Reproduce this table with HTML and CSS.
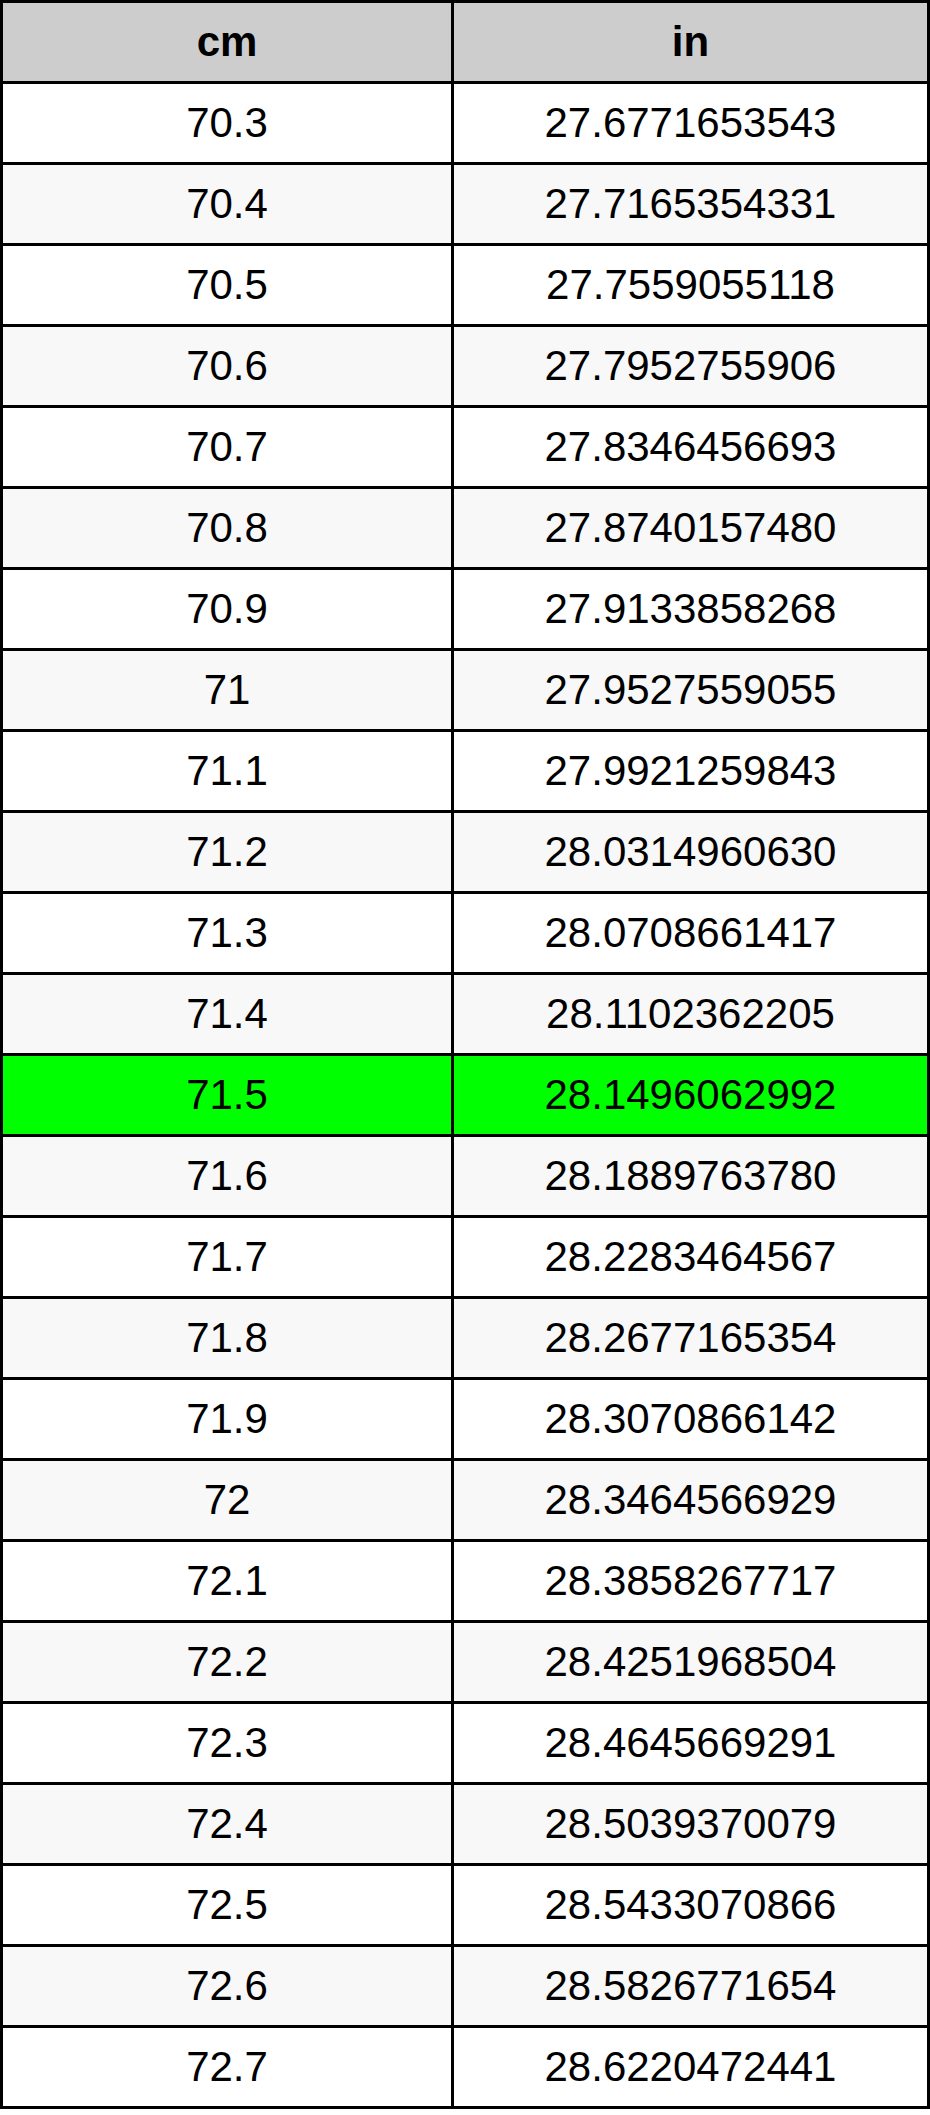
FILE: index.html
```html
<!DOCTYPE html>
<html>
<head>
<meta charset="utf-8">
<link rel="stylesheet" href="styles.css">
</head>
<body>
<div class="table">
<div class="cell head">cm</div><div class="cell head">in</div>
<div class="cell">70.3</div><div class="cell">27.6771653543</div>
<div class="cell alt">70.4</div><div class="cell alt">27.7165354331</div>
<div class="cell">70.5</div><div class="cell">27.7559055118</div>
<div class="cell alt">70.6</div><div class="cell alt">27.7952755906</div>
<div class="cell">70.7</div><div class="cell">27.8346456693</div>
<div class="cell alt">70.8</div><div class="cell alt">27.8740157480</div>
<div class="cell">70.9</div><div class="cell">27.9133858268</div>
<div class="cell alt">71</div><div class="cell alt">27.9527559055</div>
<div class="cell">71.1</div><div class="cell">27.9921259843</div>
<div class="cell alt">71.2</div><div class="cell alt">28.0314960630</div>
<div class="cell">71.3</div><div class="cell">28.0708661417</div>
<div class="cell alt">71.4</div><div class="cell alt">28.1102362205</div>
<div class="cell hl">71.5</div><div class="cell hl">28.1496062992</div>
<div class="cell alt">71.6</div><div class="cell alt">28.1889763780</div>
<div class="cell">71.7</div><div class="cell">28.2283464567</div>
<div class="cell alt">71.8</div><div class="cell alt">28.2677165354</div>
<div class="cell">71.9</div><div class="cell">28.3070866142</div>
<div class="cell alt">72</div><div class="cell alt">28.3464566929</div>
<div class="cell">72.1</div><div class="cell">28.3858267717</div>
<div class="cell alt">72.2</div><div class="cell alt">28.4251968504</div>
<div class="cell">72.3</div><div class="cell">28.4645669291</div>
<div class="cell alt">72.4</div><div class="cell alt">28.5039370079</div>
<div class="cell">72.5</div><div class="cell">28.5433070866</div>
<div class="cell alt">72.6</div><div class="cell alt">28.5826771654</div>
<div class="cell">72.7</div><div class="cell">28.6220472441</div>
</div>
</body>
</html>
```
FILE: styles.css
```css
html, body {
  margin: 0;
  padding: 0;
  background: #ffffff;
}
.table {
  display: grid;
  grid-template-columns: 448px 473px;
  grid-auto-rows: 78px;
  gap: 3px;
  padding: 3px;
  background: #000000;
  width: 924px;
}
.cell {
  background: #ffffff;
  display: flex;
  align-items: center;
  justify-content: center;
  font-family: "Liberation Sans", Arial, sans-serif;
  font-size: 42px;
  color: #000000;
}
.head {
  background: #cdcdcd;
  font-weight: bold;
}
.alt {
  background: #f8f8f8;
}
.hl {
  background: #00ff00;
}
```
